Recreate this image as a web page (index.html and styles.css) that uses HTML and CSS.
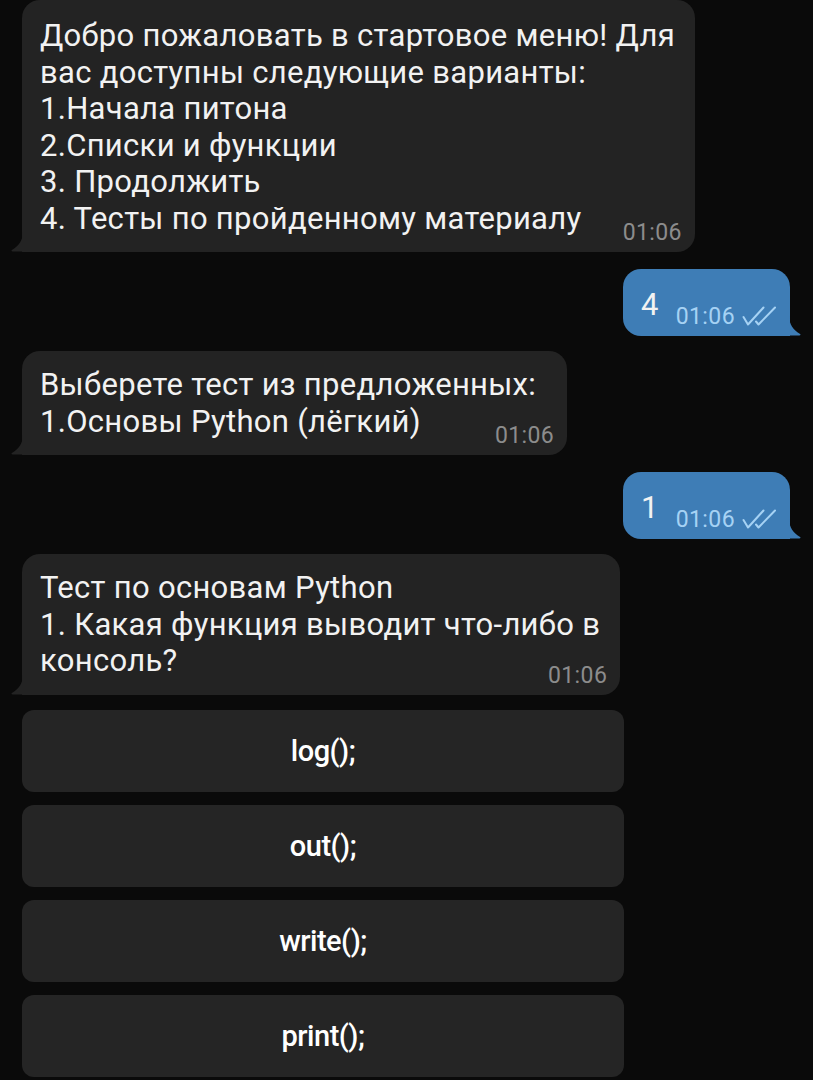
FILE: index.html
```html
<!DOCTYPE html>
<html lang="ru">
<head>
    <meta charset="UTF-8">
    <meta name="viewport" content="width=device-width, initial-scale=1.0">
    <title>Бот - тест по Python</title>
    <link rel="stylesheet" href="styles.css">
</head>
<body>

    <div class="chat">
        <!-- Стартовое меню -->
        <div class="msg msg-in">
            <div class="msg-text">Добро пожаловать в стартовое меню! Для<br>вас доступны следующие варианты:<br>1.Начала питона<br>2.Списки и функции<br>3. Продолжить</div>
            <div class="msg-last">
                <span>4. Тесты по пройденному материалу</span>
                <span class="time">01:06</span>
            </div>
            <svg class="tail" viewBox="0 0 14 22"><path d="M14 0 C13.5 9 9 16 1.5 20 C0 20.8 0.4 22 2 22 H14 Z"/></svg>
        </div>

        <div class="msg msg-out">
            <div class="msg-last">
                <span>4</span>
                <span class="time">01:06</span>
                <svg class="checks" viewBox="0 0 35 20"><path d="M1.5 11 L6 18.5 L21.5 1.5 M14 15.5 L16.5 18.5 L33 1.5"/></svg>
            </div>
            <svg class="tail" viewBox="0 0 14 22"><path d="M0 0 C0.5 9 5 16 12.5 20 C14 20.8 13.6 22 12 22 H0 Z"/></svg>
        </div>

        <div class="msg msg-in">
            <div class="msg-text">Выберете тест из предложенных:</div>
            <div class="msg-last msg-last-wide">
                <span>1.Основы Python (лёгкий)</span>
                <span class="time">01:06</span>
            </div>
            <svg class="tail" viewBox="0 0 14 22"><path d="M14 0 C13.5 9 9 16 1.5 20 C0 20.8 0.4 22 2 22 H14 Z"/></svg>
        </div>

        <div class="msg msg-out">
            <div class="msg-last">
                <span>1</span>
                <span class="time">01:06</span>
                <svg class="checks" viewBox="0 0 35 20"><path d="M1.5 11 L6 18.5 L21.5 1.5 M14 15.5 L16.5 18.5 L33 1.5"/></svg>
            </div>
            <svg class="tail" viewBox="0 0 14 22"><path d="M0 0 C0.5 9 5 16 12.5 20 C14 20.8 13.6 22 12 22 H0 Z"/></svg>
        </div>

        <div class="msg msg-in">
            <div class="msg-text">Тест по основам Python<br>1. Какая функция выводит что-либо в</div>
            <div class="msg-last">
                <span>консоль?</span>
                <span class="time">01:06</span>
            </div>
            <svg class="tail" viewBox="0 0 14 22"><path d="M14 0 C13.5 9 9 16 1.5 20 C0 20.8 0.4 22 2 22 H14 Z"/></svg>
        </div>

        <!-- Клавиатура с вариантами ответа -->
        <div class="keyboard">
            <button class="key">log();</button>
            <button class="key">out();</button>
            <button class="key">write();</button>
            <button class="key">print();</button>
        </div>
    </div>

</body>
</html>
```

FILE: styles.css
```css
/* --- Basic Setup --- */
:root {
    --chat-bg: #0a0a0a;
    --bubble-in: #232323;
    --bubble-out: #3e7db6;
    --text-color: #f2f2f2;
    --time-in: #8c8c8c;
    --time-out: #a6d2f4;
    --key-bg: #252525;
}

body {
    margin: 0;
    background-color: var(--chat-bg);
    color: var(--text-color);
    font-family: Roboto, "Noto Sans", sans-serif;
    overflow: hidden;
}

/* --- Chat column --- */
.chat {
    display: flex;
    flex-direction: column;
    gap: 15px;
    padding: 0 23px 0 22px;
}

.msg {
    position: relative;
    display: flex;
    flex-direction: column;
    font-size: 31px;
    line-height: 36.5px;
    letter-spacing: 0.3px;
    white-space: nowrap;
    border-radius: 18px;
}

.msg-in {
    align-self: flex-start;
    background-color: var(--bubble-in);
    border-bottom-left-radius: 0;
    padding: 16.5px 20px 15px 18px;
}

.msg-in:first-child {
    padding-top: 18px;
}

.msg-out {
    align-self: flex-end;
    background-color: var(--bubble-out);
    border-bottom-right-radius: 0;
    padding: 18.5px 13px 12px 18px;
    margin-top: 1.5px;
}

.msg-last {
    display: flex;
    align-items: flex-end;
    justify-content: space-between;
    gap: 40px;
}

.msg-last-wide {
    gap: 74px;
}

.msg-out .msg-last {
    justify-content: flex-start;
    gap: 0;
}

.time {
    font-size: 23px;
    line-height: 24px;
    letter-spacing: 0.4px;
    color: var(--time-in);
    margin: 0 -7px -8px 0;
}

.msg-out .time {
    color: var(--time-out);
    margin: 0 0 -5px 17px;
}

.checks {
    width: 35px;
    height: 20px;
    margin: 0 0 -2px 7px;
    fill: none;
    stroke: var(--time-out);
    stroke-width: 2;
    stroke-linecap: round;
    stroke-linejoin: round;
}

/* --- Bubble tails --- */
.tail {
    position: absolute;
    bottom: 0;
    width: 12px;
    height: 20px;
}

.msg-in .tail {
    left: -11px;
    fill: var(--bubble-in);
}

.msg-out .tail {
    right: -11px;
    fill: var(--bubble-out);
}

/* --- Inline keyboard --- */
.keyboard {
    display: flex;
    flex-direction: column;
    gap: 13px;
    width: 602px;
    margin-top: 0;
}

.key {
    height: 82px;
    border: none;
    border-radius: 12px;
    background-color: var(--key-bg);
    color: #ffffff;
    font-family: Roboto, "Noto Sans", sans-serif;
    font-size: 29px;
    font-weight: 500;
    letter-spacing: -0.5px;
}
```
